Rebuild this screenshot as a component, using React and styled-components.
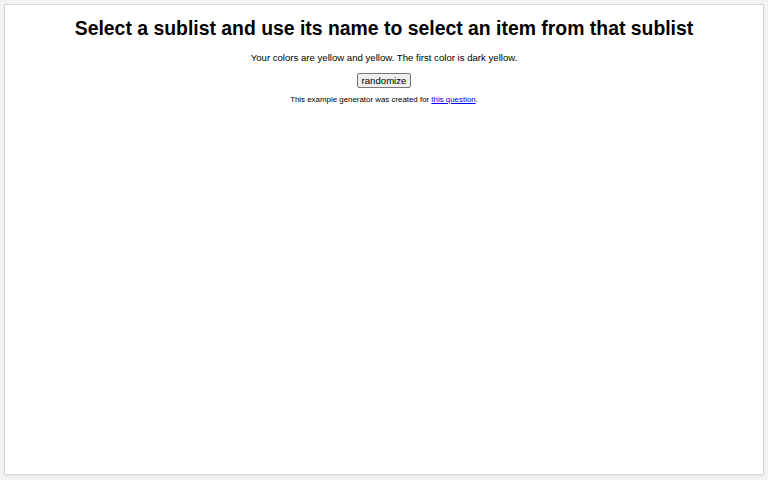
import React from "react";
import styled, { createGlobalStyle } from "styled-components";

const GlobalStyle = createGlobalStyle`
  html, body { margin: 0; padding: 0; }
  body {
    background: #f3f3f3;
    font-family: "Liberation Sans", Arial, sans-serif;
    color: #000;
  }
`;

const Page = styled.div`
  box-sizing: border-box;
  height: 480px;
  padding: 4px 4px 5px 4px;
  display: flex;
`;

const Card = styled.main`
  flex: 1;
  background: #fff;
  border: 1px solid #d8d8d8;
  box-shadow: 0 1px 2px rgba(0, 0, 0, 0.06);
  display: flex;
  flex-direction: column;
  align-items: center;
  padding-top: 11px;
`;

const Title = styled.h1`
  margin: 0;
  font-size: 19.4px;
  font-weight: bold;
  line-height: 24px;
`;

const Message = styled.p`
  margin: 12px 0 0;
  font-size: 9.6px;
  line-height: 12px;
`;

const Button = styled.button`
  margin-top: 9px;
  font-family: "Liberation Sans", Arial, sans-serif;
  font-size: 9.6px;
  line-height: 11px;
  padding: 1px 4px;
  background: #efefef;
  border: 1px solid #767676;
  border-radius: 2px;
  color: #000;
`;

const Note = styled.p`
  margin: 7px 0 0;
  font-size: 7.9px;
  line-height: 10px;
`;

const Link = styled.a`
  color: #0000ee;
  text-decoration: underline;
`;

export default function App() {
  return (
    <>
      <GlobalStyle />
      <Page>
        <Card>
          <Title>Select a sublist and use its name to select an item from that sublist</Title>
          <Message>Your colors are yellow and yellow. The first color is dark yellow.</Message>
          <Button type="button">randomize</Button>
          <Note>
            This example generator was created for <Link href="#">this question</Link>.
          </Note>
        </Card>
      </Page>
    </>
  );
}
